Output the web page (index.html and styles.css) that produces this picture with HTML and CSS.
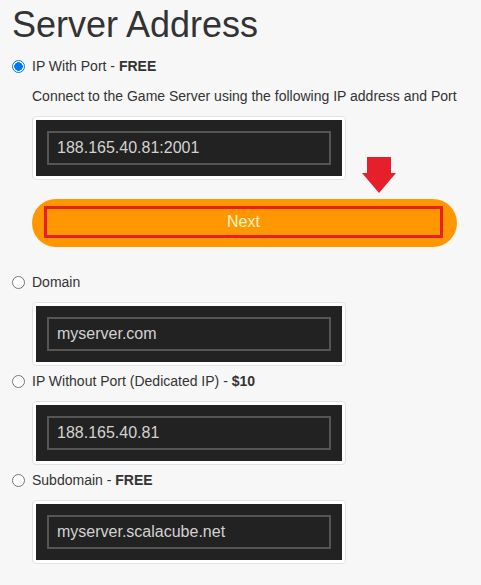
FILE: index.html
```html
<!DOCTYPE html>
<html>
<head>
<meta charset="utf-8">
<link rel="stylesheet" href="styles.css">
</head>
<body>
<div class="page">
  <h1 class="title">Server Address</h1>

  <div class="option">
    <label class="opt-row"><span class="radio checked"></span><span>IP With Port - <b>FREE</b></span></label>
    <div class="opt-body">
      <p class="desc">Connect to the Game Server using the following IP address and Port</p>
      <div class="card"><div class="dark"><div class="field">188.165.40.81:2001</div></div></div>
      <div class="next-wrap">
        <svg class="arrow" width="34" height="36" viewBox="0 0 34 36"><path d="M5 0 H29 V16 H34 L17 36 L0 16 H5 Z" fill="#e5202a"/></svg>
        <button class="next"><span class="next-box">Next</span></button>
      </div>
    </div>
  </div>

  <div class="option">
    <label class="opt-row"><span class="radio"></span><span>Domain</span></label>
    <div class="opt-body">
      <div class="card"><div class="dark"><div class="field">myserver.com</div></div></div>
    </div>
  </div>

  <div class="option">
    <label class="opt-row"><span class="radio"></span><span>IP Without Port (Dedicated IP) - <b>$10</b></span></label>
    <div class="opt-body">
      <div class="card"><div class="dark"><div class="field">188.165.40.81</div></div></div>
    </div>
  </div>

  <div class="option">
    <label class="opt-row"><span class="radio"></span><span>Subdomain - <b>FREE</b></span></label>
    <div class="opt-body">
      <div class="card"><div class="dark"><div class="field">myserver.scalacube.net</div></div></div>
    </div>
  </div>
</div>
</body>
</html>
```

FILE: styles.css
```css
html, body {
  margin: 0;
  padding: 0;
  background: #f7f7f7;
}
body {
  font-family: "Liberation Sans", Arial, sans-serif;
  color: #333;
}
.page {
  padding: 5px 0 0 12px;
}
.title {
  margin: 0;
  font-size: 36px;
  font-weight: normal;
  line-height: 40px;
  color: #333;
}
.option {
  margin-top: 5px;
}
.option:first-of-type {
  margin-top: 11px;
}
.opt-row {
  display: flex;
  align-items: center;
  gap: 7px;
  height: 20px;
  font-size: 14px;
  color: #333;
}
.opt-row b {
  font-weight: bold;
}
.radio {
  width: 11px;
  height: 11px;
  border: 1px solid #767676;
  border-radius: 50%;
  background: #fff;
  flex: none;
  box-sizing: content-box;
}
.radio.checked {
  border-color: #0075ff;
  background: radial-gradient(circle, #0075ff 0 4px, #fff 4.5px);
}
.opt-body {
  margin-left: 20px;
  padding-top: 10px;
}
.desc {
  margin: 0 0 10px;
  font-size: 14px;
  line-height: 20px;
  color: #333;
}
.card {
  width: 306px;
  padding: 3px;
  background: #fff;
  border: 1px solid #e2e2e2;
  border-radius: 4px;
}
.dark {
  background: #222;
  padding: 11px;
}
.field {
  height: 30px;
  border: 2px solid #555;
  padding-left: 8px;
  font-size: 16px;
  line-height: 30px;
  color: #d2d2d2;
}
.next-wrap {
  position: relative;
  margin-top: 19px;
  margin-bottom: 25px;
}
.arrow {
  position: absolute;
  left: 330px;
  top: -42px;
}
.next {
  display: block;
  width: 425px;
  height: 48px;
  border: 0;
  border-radius: 24px;
  background: #ff9800;
  padding: 7px 14px 9px 12px;
  margin: 0;
  cursor: pointer;
}
.next-box {
  display: flex;
  align-items: center;
  justify-content: center;
  height: 100%;
  box-sizing: border-box;
  border: 3px solid #e5202a;
  font-family: "Liberation Sans", Arial, sans-serif;
  font-size: 16px;
  color: #fff4c8;
}
```
